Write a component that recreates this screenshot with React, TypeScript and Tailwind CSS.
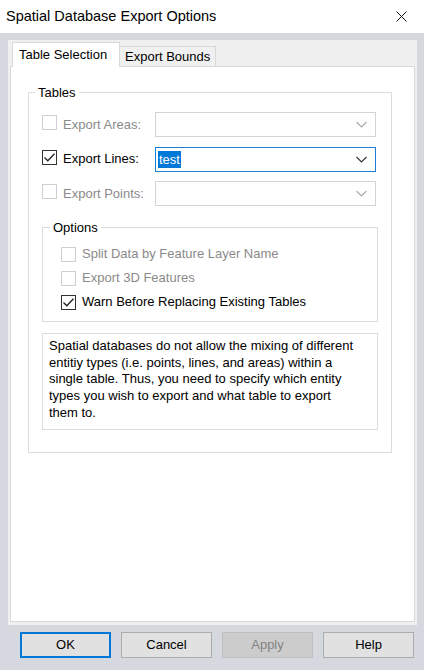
import React from 'react';

const Check: React.FC<{ checked?: boolean; disabled?: boolean }> = ({ checked, disabled }) => (
  <div
    className={`w-[15px] h-[15px] shrink-0 border bg-white flex items-center justify-center ${
      disabled ? 'border-[#cfcfcf]' : 'border-[#333333]'
    }`}
  >
    {checked && (
      <svg width="13" height="13" viewBox="0 0 13 13">
        <path d="M1.5 6.5 L4.8 9.8 L11.5 2.8" stroke="#222" strokeWidth="1.3" fill="none" />
      </svg>
    )}
  </div>
);

const Chevron: React.FC<{ disabled?: boolean }> = ({ disabled }) => (
  <svg width="11" height="7" viewBox="0 0 11 7" className="mr-[8px]">
    <path d="M0.5 1 L5.5 6 L10.5 1" stroke={disabled ? '#a8a8a8' : '#333'} strokeWidth="1.1" fill="none" />
  </svg>
);

const TableRow: React.FC<{ label: string; checked?: boolean; enabled?: boolean; value?: string }> = ({
  label,
  checked,
  enabled,
  value,
}) => (
  <div className="flex items-center h-[25px]">
    <div className="w-[113px] flex items-center gap-[6px]">
      <div className="-mt-[4px]">
        <Check checked={checked} disabled={!enabled} />
      </div>
      <span className={enabled ? 'text-black' : 'text-[#8a8a8a]'}>{label}</span>
    </div>
    <div
      className={`w-[221px] h-[25px] border bg-white flex items-center justify-between ${
        enabled ? 'border-[#1a7fd6]' : 'border-[#d4d4d4]'
      }`}
    >
      {value ? (
        <span className="ml-[2px] bg-[#0078d7] text-white px-[1px] leading-[17px]">{value}</span>
      ) : (
        <span />
      )}
      <Chevron disabled={!enabled} />
    </div>
  </div>
);

const OptionRow: React.FC<{ label: string; checked?: boolean; enabled?: boolean }> = ({ label, checked, enabled }) => (
  <div className="flex items-center h-[24px] gap-[6px]">
    <Check checked={checked} disabled={!enabled} />
    <span className={enabled ? 'text-black' : 'text-[#8a8a8a]'}>{label}</span>
  </div>
);

export default function App() {
  return (
    <div className="w-[424px] h-[670px] bg-[#d5d9df] flex flex-col font-['Liberation_Sans',Arial,sans-serif] text-[13px] text-black">
      {/* title bar */}
      <div className="h-[33px] bg-white flex items-center justify-between pl-[6px] pr-[17px]">
        <span className="text-[14.5px] leading-none">Spatial Database Export Options</span>
        <svg width="11" height="11" viewBox="0 0 11 11">
          <path d="M0.5 0.5 L10.5 10.5 M10.5 0.5 L0.5 10.5" stroke="#111" strokeWidth="1" />
        </svg>
      </div>

      <div className="flex-1 px-[8px] pt-[7px] flex flex-col">
        {/* tab control */}
        <div className="w-[409px] h-[585px] bg-[#f0f0f0] pt-[2px] px-[2px] pb-[3px] flex flex-col">
          <div className="h-[25px] flex items-end -mb-px relative z-10 pl-[2px]">
            <div className="h-[25px] w-[108px] bg-white border border-b-0 border-[#d9d9d9] pl-[6px] pt-[4px] leading-[16px]">
              Table Selection
            </div>
            <div className="h-[21px] w-[96px] bg-[#f0f0f0] border border-l-0 border-[#d9d9d9] pl-[5px] pt-[2px] leading-[16px]">
              Export Bounds
            </div>
          </div>

          {/* panel */}
          <div className="flex-1 bg-white border border-[#d9d9d9] pt-[18px] pl-[17px]">
            <fieldset className="w-[363px] border border-[#dcdcdc] pb-[22px]">
              <legend className="ml-[6px] px-[3px] leading-[15px]">Tables</legend>
              <div className="px-[13px] pt-[12px] flex flex-col">
                <div className="flex flex-col gap-[9.5px]">
                  <TableRow label="Export Areas:" />
                  <TableRow label="Export Lines:" checked enabled value="test" />
                  <TableRow label="Export Points:" />
                </div>

                <fieldset className="mt-[14px] w-[336px] border border-[#dcdcdc] pb-[7px]">
                  <legend className="ml-[7px] px-[3px] leading-[15px]">Options</legend>
                  <div className="pl-[18px] pt-[7px] flex flex-col">
                    <OptionRow label="Split Data by Feature Layer Name" />
                    <OptionRow label="Export 3D Features" />
                    <OptionRow label="Warn Before Replacing Existing Tables" checked enabled />
                  </div>
                </fieldset>

                <div className="mt-[11px] w-[336px] h-[97px] border border-[#dcdcdc] pl-[6px] pt-[4px] leading-[16.7px] whitespace-nowrap">
                  Spatial databases do not allow the mixing of different
                  <br />
                  entitiy types (i.e. points, lines, and areas) within a
                  <br />
                  single table. Thus, you need to specify which entity
                  <br />
                  types you wish to export and what table to export
                  <br />
                  them to.
                </div>
              </div>
            </fieldset>
          </div>
        </div>

        {/* buttons */}
        <div className="mt-[7px] ml-[12px] flex gap-[10px]">
          <button className="w-[91px] h-[26px] bg-[#e1e1e1] border-2 border-[#0078d7]">OK</button>
          <button className="w-[91px] h-[26px] bg-[#e1e1e1] border border-[#adadad]">Cancel</button>
          <button className="w-[91px] h-[26px] bg-[#cccccc] border border-[#bfbfbf] text-[#838383]">Apply</button>
          <button className="w-[91px] h-[26px] bg-[#e1e1e1] border border-[#adadad]">Help</button>
        </div>
      </div>
    </div>
  );
}
